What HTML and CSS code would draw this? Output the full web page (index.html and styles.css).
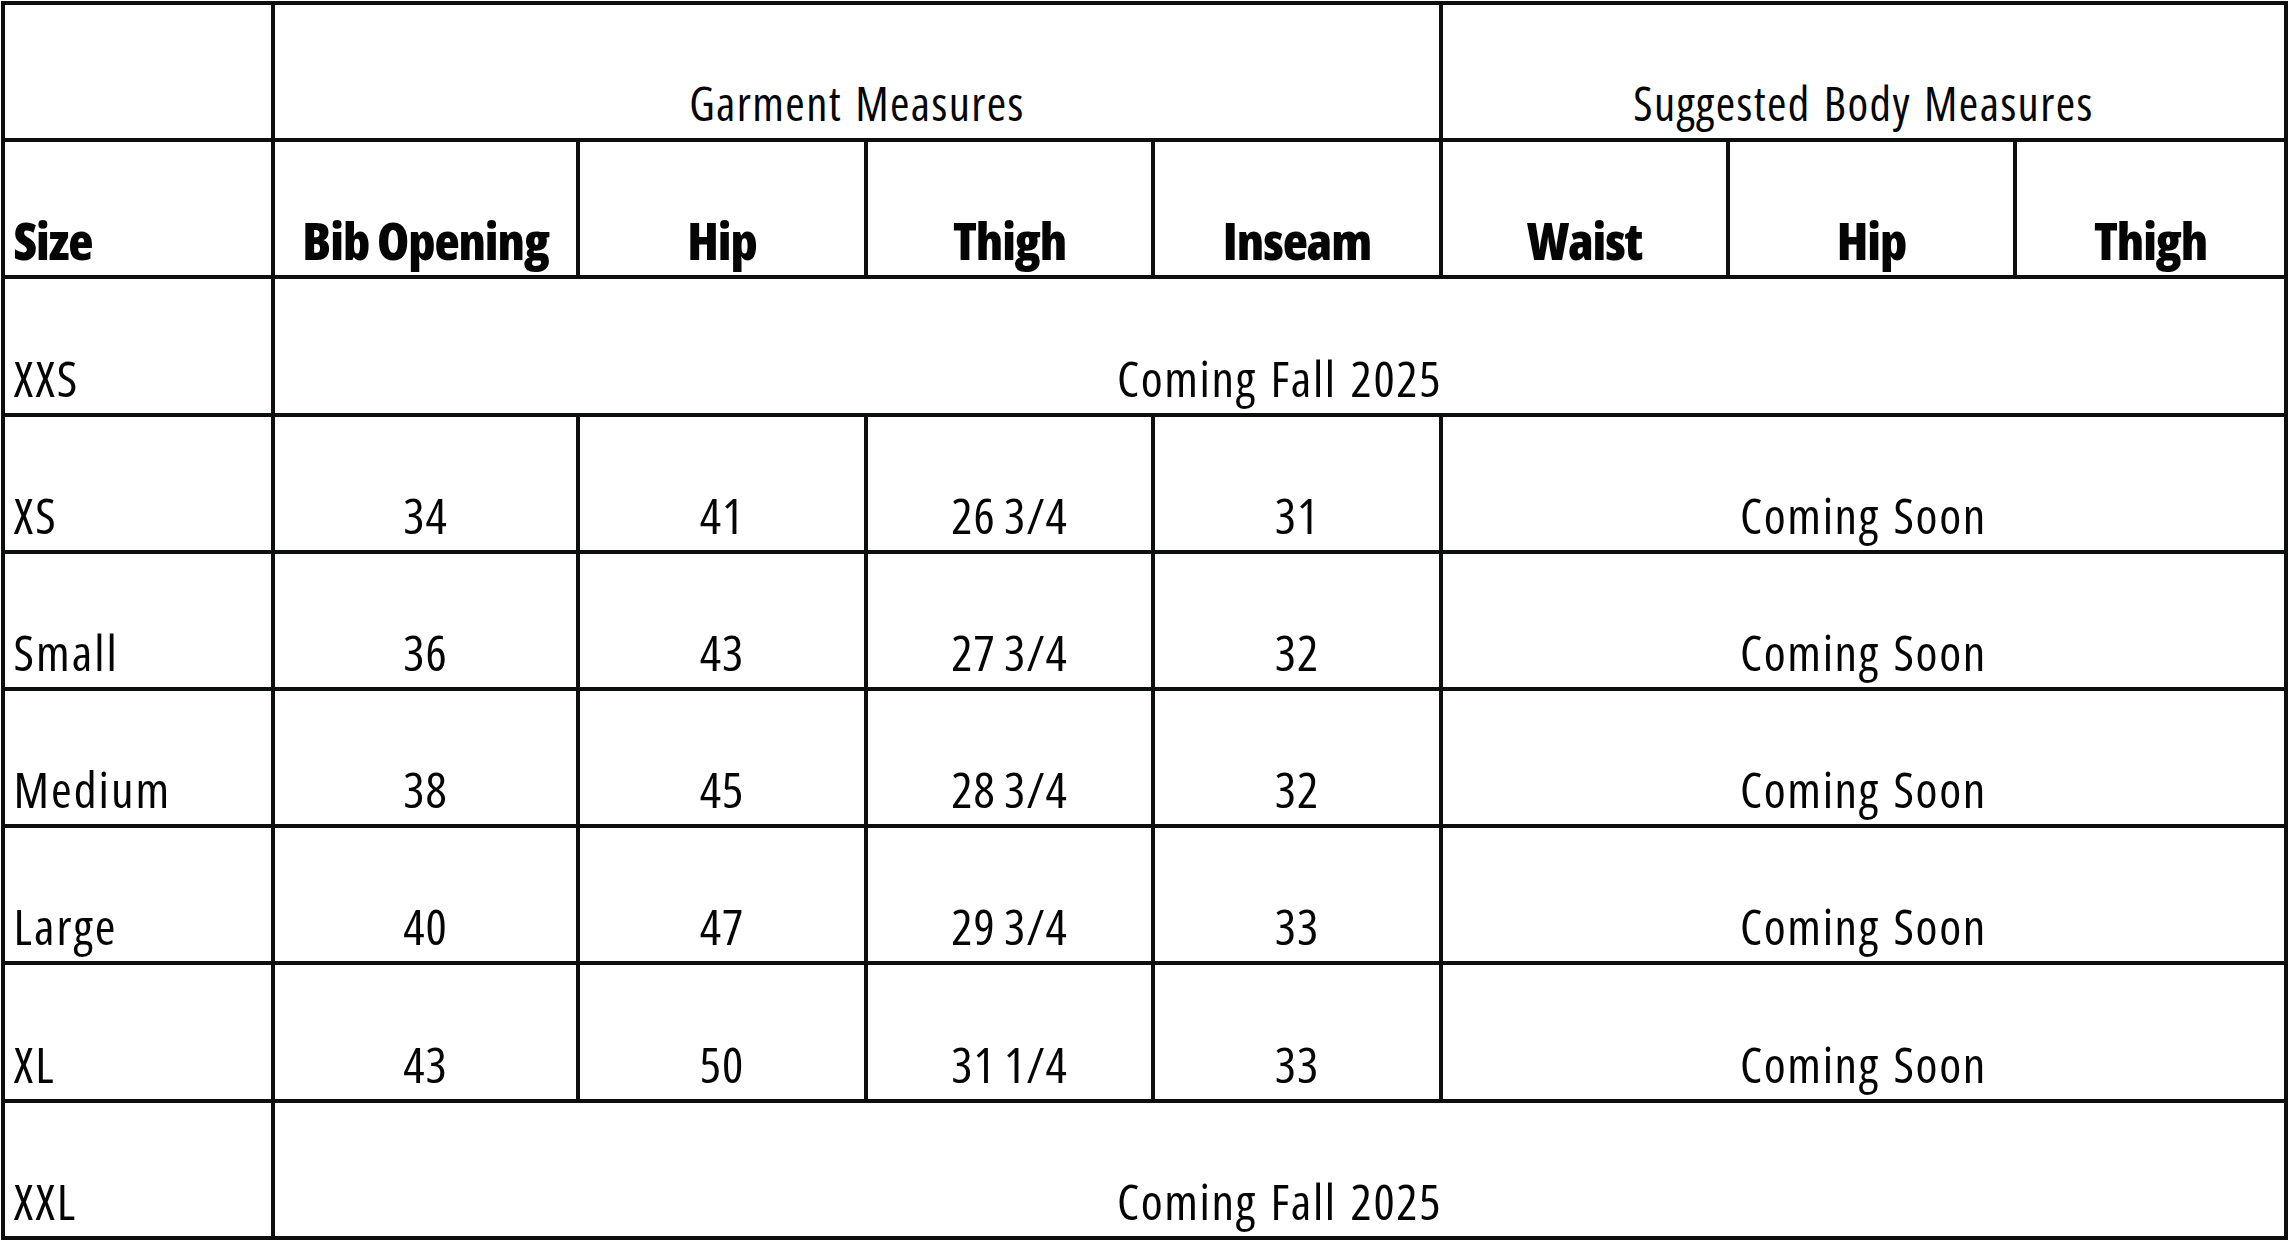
FILE: index.html
```html
<!DOCTYPE html>
<html>
<head>
<meta charset="utf-8">
<title>Size Chart</title>
<link rel="stylesheet" href="styles.css">
</head>
<body>
<div class="chart" role="table">
  <div class="cell"></div>
  <div class="cell group span4">Garment Measures</div>
  <div class="cell group span3">Suggested Body Measures</div>

  <div class="cell head left">Size</div>
  <div class="cell head">Bib Opening</div>
  <div class="cell head">Hip</div>
  <div class="cell head">Thigh</div>
  <div class="cell head">Inseam</div>
  <div class="cell head">Waist</div>
  <div class="cell head">Hip</div>
  <div class="cell head">Thigh</div>

  <div class="cell left">XXS</div>
  <div class="cell span7">Coming Fall 2025</div>

  <div class="cell left">XS</div>
  <div class="cell num">34</div>
  <div class="cell num">41</div>
  <div class="cell num">26 3/4</div>
  <div class="cell num">31</div>
  <div class="cell span3">Coming Soon</div>

  <div class="cell left">Small</div>
  <div class="cell num">36</div>
  <div class="cell num">43</div>
  <div class="cell num">27 3/4</div>
  <div class="cell num">32</div>
  <div class="cell span3">Coming Soon</div>

  <div class="cell left">Medium</div>
  <div class="cell num">38</div>
  <div class="cell num">45</div>
  <div class="cell num">28 3/4</div>
  <div class="cell num">32</div>
  <div class="cell span3">Coming Soon</div>

  <div class="cell left">Large</div>
  <div class="cell num">40</div>
  <div class="cell num">47</div>
  <div class="cell num">29 3/4</div>
  <div class="cell num">33</div>
  <div class="cell span3">Coming Soon</div>

  <div class="cell left">XL</div>
  <div class="cell num">43</div>
  <div class="cell num">50</div>
  <div class="cell num">31 1/4</div>
  <div class="cell num">33</div>
  <div class="cell span3">Coming Soon</div>

  <div class="cell left">XXL</div>
  <div class="cell span7">Coming Fall 2025</div>
</div>
</body>
</html>
```
FILE: styles.css
```css
html, body {
  margin: 0;
  padding: 0;
  background: #fff;
}

.chart {
  display: grid;
  grid-template-columns: 270px 305px 288px 287px 288px 287px 287px 271px;
  grid-template-rows: repeat(9, 137.2px);
  margin: 1px 0 0 1px;
  width: max-content;
  border-top: 4px solid #0d0f0e;
  border-left: 4px solid #0d0f0e;
  font-family: "Open Sans", "Liberation Sans", sans-serif;
  font-stretch: 75%;
  font-size: 50px;
  color: #050505;
}

.cell {
  box-sizing: border-box;
  border-right: 4px solid #0d0f0e;
  border-bottom: 4px solid #0d0f0e;
  display: flex;
  align-items: flex-end;
  justify-content: center;
  line-height: 50px;
  padding: 0 4px 10px 4px;
  white-space: nowrap;
  letter-spacing: 1.6px;
  word-spacing: 3px;
}

.left {
  justify-content: flex-start;
  padding-left: 8.5px;
  letter-spacing: 2px;
}

.num {
  letter-spacing: 1px;
  word-spacing: -2px;
}

.head {
  font-weight: 800;
  font-size: 52px;
  letter-spacing: -1.1px;
  word-spacing: 0;
}

.group {
  font-size: 47px;
  padding-bottom: 10px;
  letter-spacing: 1.4px;
}

.span3 { grid-column: span 3; }
.span4 { grid-column: span 4; }
.span7 { grid-column: span 7; }
```
